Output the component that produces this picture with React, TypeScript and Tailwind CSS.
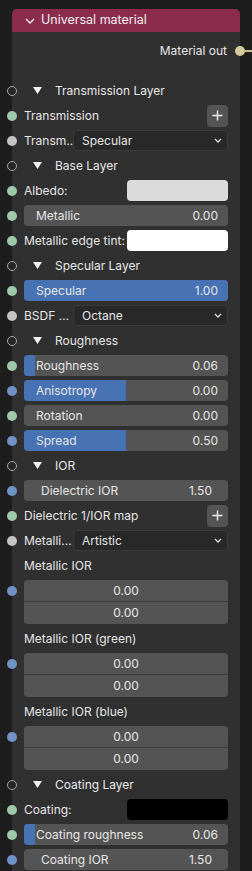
import React from "react";

type SocketKind = "green" | "grey" | "blue" | "hollow" | null;

function Socket({ kind }: { kind: SocketKind }) {
    if (!kind) return null;
    if (kind === "hollow") {
        return <span className="absolute left-[-5px] top-1/2 -translate-y-1/2 w-[10px] h-[10px] rounded-full border-[1.5px] border-[#a8a8a8] bg-[#262626]" />;
    }
    const bg = kind === "green" ? "bg-[#9ec8aa]" : kind === "grey" ? "bg-[#c4c4c4]" : "bg-[#7093c6]";
    return <span className={`absolute left-[-5px] top-1/2 -translate-y-1/2 w-[10px] h-[10px] rounded-full ${bg}`} />;
}

function Row({ socket, children }: { socket?: SocketKind; children: React.ReactNode }) {
    return (
        <div className="relative flex items-center h-[21px] px-[12px]">
            <Socket kind={socket ?? null} />
            {children}
        </div>
    );
}

function Panel({ label }: { label: string }) {
    return (
        <Row socket="hollow">
            <svg width="9" height="7" viewBox="0 0 9 7" className="ml-[9px]">
                <path d="M0 0 H9 L4.5 7 Z" fill="#f2f2f2" />
            </svg>
            <span className="ml-[13px] text-[#e8e8e8]">{label}</span>
        </Row>
    );
}

function Slider({ label, value, fill, socket, inset }: { label: string; value: string; fill?: number; socket: SocketKind; inset?: boolean }) {
    return (
        <Row socket={socket}>
            <div className="relative flex-1 h-full rounded-[4px] bg-[#545454] overflow-hidden flex items-center">
                {fill ? <div className="absolute left-0 top-0 bottom-0 bg-[#4772b3]" style={{ width: `${fill * 100}%` }} /> : null}
                <span className={`relative text-[#e6e6e6] ${inset ? "pl-[17px]" : "pl-[12px]"}`}>{label}</span>
                <span className={`relative ml-auto text-[#e6e6e6] ${inset ? "pr-[16px]" : "pr-[10px]"}`}>{value}</span>
            </div>
        </Row>
    );
}

function Dropdown({ label, value }: { label: string; value: string }) {
    return (
        <Row socket="grey">
            <span className="w-[49px] shrink-0 text-[#e6e6e6] whitespace-nowrap">{label}</span>
            <div className="flex-1 h-full rounded-[4px] bg-[#282828] border border-[#3a3a3a] flex items-center pl-[8px] pr-[5px]">
                <span className="text-[#e6e6e6]">{value}</span>
                <svg width="8" height="5" viewBox="0 0 8 5" className="ml-auto">
                    <path d="M1 1 L4 4 L7 1" stroke="#dcdcdc" strokeWidth="1.3" fill="none" />
                </svg>
            </div>
        </Row>
    );
}

function Swatch({ label, color }: { label: string; color: string }) {
    return (
        <Row socket="green">
            <span className="flex-1 text-[#e6e6e6] whitespace-nowrap">{label}</span>
            <div className={`w-[101px] h-full rounded-[4px] ${color}`} />
        </Row>
    );
}

function AddRow({ label }: { label: string }) {
    return (
        <Row socket="green">
            <span className="flex-1 text-[#e6e6e6]">{label}</span>
            <div className="w-[21px] h-[22px] rounded-[4px] bg-[#545454] flex items-center justify-center">
                <svg width="11" height="11" viewBox="0 0 11 11">
                    <path d="M5.5 0.5 V10.5 M0.5 5.5 H10.5" stroke="#f0f0f0" strokeWidth="1.4" />
                </svg>
            </div>
        </Row>
    );
}

function Vector({ label }: { label: string }) {
    return (
        <>
            <Row>
                <span className="text-[#e6e6e6]">{label}</span>
            </Row>
            <div className="relative px-[12px]">
                <span className="absolute left-[-5px] top-[6px] w-[10px] h-[10px] rounded-full bg-[#7093c6]" />
                <div className="flex flex-col rounded-[4px] overflow-hidden">
                    <div className="h-[22px] bg-[#545454] flex items-center justify-center text-[#e6e6e6] border-b border-[#3c3c3c]">0.00</div>
                    <div className="h-[22px] bg-[#545454] flex items-center justify-center text-[#e6e6e6]">0.00</div>
                </div>
            </div>
        </>
    );
}

export default function App() {
    return (
        <div className="w-[252px] h-[871px] bg-[#1d1d1d] overflow-hidden pt-[9px] pl-[12px] font-[Inter,sans-serif] text-[12px] leading-none">
            <div className="relative w-[228px] h-[900px] bg-[#303030] rounded-t-[5px]">
                {/* Header */}
                <div className="h-[23px] bg-[#8b2c4d] rounded-t-[5px] flex items-center pl-[13px]">
                    <svg width="10" height="6" viewBox="0 0 10 6">
                        <path d="M1 1 L5 5 L9 1" stroke="#f0f0f0" strokeWidth="1.4" fill="none" />
                    </svg>
                    <span className="ml-[6px] text-[#f0f0f0] text-[12.5px]">Universal material</span>
                </div>

                {/* Output */}
                <div className="relative h-[21px] mt-[8px] flex items-center justify-end pr-[13px]">
                    <span className="text-[#e6e6e6]">Material out</span>
                    <span className="absolute right-[-5px] top-1/2 -translate-y-1/2 w-[10px] h-[10px] rounded-full bg-[#d2cc9c]" />
                    <span className="absolute right-[-12px] top-1/2 -translate-y-1/2 w-[8px] h-[2px] bg-[#c4bf92]" />
                </div>

                <div className="flex flex-col gap-[4px] mt-[19px]">
                    <Panel label="Transmission Layer" />
                    <AddRow label="Transmission" />
                    <Dropdown label="Transm…" value="Specular" />

                    <Panel label="Base Layer" />
                    <Swatch label="Albedo:" color="bg-[#dadada]" />
                    <Slider label="Metallic" value="0.00" socket="green" />
                    <Swatch label="Metallic edge tint:" color="bg-white" />

                    <Panel label="Specular Layer" />
                    <Slider label="Specular" value="1.00" fill={1} socket="green" />
                    <Dropdown label="BSDF …" value="Octane" />

                    <Panel label="Roughness" />
                    <Slider label="Roughness" value="0.06" fill={0.055} socket="green" />
                    <Slider label="Anisotropy" value="0.00" fill={0.5} socket="blue" />
                    <Slider label="Rotation" value="0.00" socket="green" />
                    <Slider label="Spread" value="0.50" fill={0.5} socket="blue" />

                    <Panel label="IOR" />
                    <Slider label="Dielectric IOR" value="1.50" socket="blue" inset />
                    <AddRow label="Dielectric 1/IOR map" />
                    <Dropdown label="Metalli…" value="Artistic" />
                    <Vector label="Metallic IOR" />
                    <Vector label="Metallic IOR (green)" />
                    <Vector label="Metallic IOR (blue)" />

                    <Panel label="Coating Layer" />
                    <Swatch label="Coating:" color="bg-black" />
                    <Slider label="Coating roughness" value="0.06" fill={0.055} socket="green" />
                    <Slider label="Coating IOR" value="1.50" socket="blue" inset />
                </div>
            </div>
        </div>
    );
}
